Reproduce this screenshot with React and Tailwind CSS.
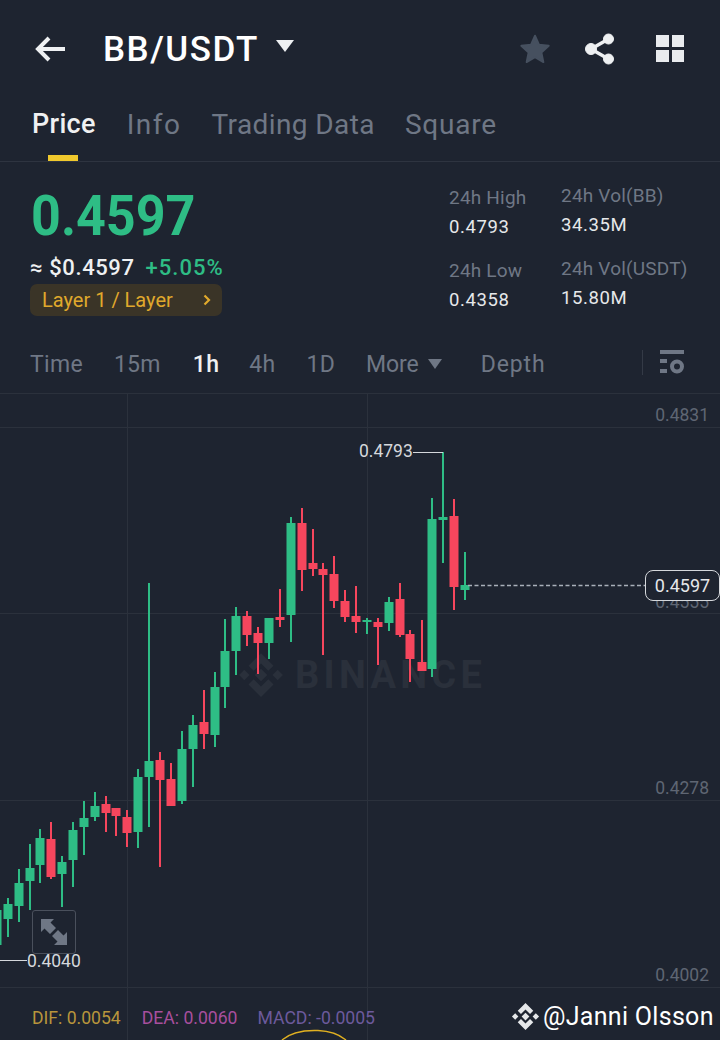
import React from 'react';

// x, wick top, wick bottom, body top, body bottom, up?
const candles = [
  [-3, 910, 945, 910, 945, 1],
  [8, 898, 937, 904, 919, 1],
  [19, 869, 922, 883, 906, 1],
  [30, 844, 910, 868, 881, 1],
  [40, 829, 883, 838, 865, 1],
  [51, 822, 879, 839, 877, 0],
  [62, 856, 907, 862, 874, 1],
  [73, 822, 887, 830, 860, 1],
  [84, 801, 855, 818, 827, 1],
  [95, 792, 821, 806, 817, 1],
  [106, 796, 832, 804, 813, 0],
  [116, 808, 836, 808, 816, 0],
  [127, 810, 847, 817, 833, 0],
  [138, 769, 848, 777, 832, 1],
  [149, 583, 827, 761, 777, 1],
  [160, 752, 867, 760, 780, 0],
  [171, 763, 806, 779, 806, 0],
  [182, 731, 804, 749, 801, 1],
  [193, 715, 787, 725, 749, 1],
  [204, 690, 749, 722, 734, 0],
  [215, 672, 747, 687, 735, 1],
  [225, 619, 708, 651, 687, 1],
  [236, 607, 675, 616, 651, 1],
  [247, 611, 646, 616, 635, 0],
  [258, 627, 674, 633, 643, 0],
  [269, 618, 659, 618, 643, 1],
  [280, 589, 627, 617, 620, 0],
  [291, 517, 642, 523, 615, 1],
  [302, 508, 591, 523, 570, 0],
  [313, 529, 576, 563, 569, 0],
  [323, 563, 655, 569, 575, 0],
  [334, 556, 608, 574, 601, 0],
  [345, 590, 622, 601, 617, 0],
  [356, 586, 633, 616, 622, 0],
  [367, 618, 634, 620, 622, 1],
  [378, 618, 665, 622, 627, 0],
  [389, 597, 631, 602, 623, 1],
  [400, 583, 637, 599, 635, 0],
  [410, 630, 682, 634, 659, 0],
  [422, 620, 670, 662, 671, 0],
  [432, 498, 677, 519, 669, 1],
  [443, 452, 563, 517, 520, 1],
  [454, 499, 610, 516, 587, 0],
  [465, 552, 600, 585, 590, 1],
];

const GREEN = '#2ebd85';
const RED = '#f6465d';
const CHART_TOP = 393;

const BinanceMark = ({ className, color }) => (
  <svg viewBox="0 0 48 48" className={className} fill={color}>
    <path d="M24 3 L36 15 L31 20 L24 13 L17 20 L12 15 Z" />
    <path d="M24 45 L12 33 L17 28 L24 35 L31 28 L36 33 Z" />
    <path d="M3 24 L8 19 L13 24 L8 29 Z" />
    <path d="M35 24 L40 19 L45 24 L40 29 Z" />
    <path d="M24 18 L30 24 L24 30 L18 24 Z" />
  </svg>
);

const ChartLayer = () => (
  <svg className="absolute inset-0 w-full h-full" viewBox={`0 ${CHART_TOP} 720 647`}>
    {/* grid */}
    {[393, 427, 613, 800, 987].map((y) => (
      <line key={y} x1="0" x2="720" y1={y + 0.5} y2={y + 0.5} stroke="#2b313c" strokeWidth="1" />
    ))}
    {[127, 367].map((x) => (
      <line key={x} x1={x + 0.5} x2={x + 0.5} y1="393" y2="1040" stroke="#2b313c" strokeWidth="1" />
    ))}

    {/* candles */}
    {candles.map(([x, wt, wb, bt, bb, up]) => (
      <g key={x} fill={up ? GREEN : RED}>
        <rect x={x - 1} y={wt} width="2" height={wb - wt} />
        <rect x={x - 4.5} y={bt} width="9" height={Math.max(bb - bt, 2)} />
      </g>
    ))}

    {/* high / low leaders */}
    <path d="M413 452.5 H443" stroke="#d5d8dc" strokeWidth="1" fill="none" />
    <path d="M0 960.5 H27" stroke="#d5d8dc" strokeWidth="1" fill="none" />
    {/* last price */}
    <path d="M468 585.5 H645" stroke="#a9afb9" strokeWidth="1.5" strokeDasharray="4 2.5" fill="none" />
    {/* pen mark at the bottom edge */}
    <path d="M282 1040 C290 1033 304 1030 318 1030.5 C330 1031 340 1035 346 1040" stroke="#e0b021" strokeWidth="1.5" fill="none" />
  </svg>
);

const Stat = ({ label, value, className }) => (
  <div className={className}>
    <div className="text-[19px] leading-[24px] text-[#6f7785] tracking-[0.2px]">{label}</div>
    <div className="mt-[5px] text-[18.5px] leading-[24px] text-[#e6e8ea] tracking-[0.6px]">{value}</div>
  </div>
);

const Interval = ({ children, active, className }) => (
  <span className={`${active ? 'text-[#f0f1f2] font-medium' : 'text-[#6f7785]'} ${className}`}>{children}</span>
);

export default function App() {
  return (
    <div className="w-[720px] h-[1040px] overflow-hidden flex flex-col bg-[#1e2430] font-['Roboto',sans-serif]">
      {/* top bar */}
      <div className="h-[97px] shrink-0 flex items-center pl-[34px] pr-[36px]">
        <svg viewBox="0 0 32 28" className="w-[32px] h-[28px] text-[#eef0f2]" fill="none" stroke="currentColor" strokeWidth="4">
          <path d="M31 14 H4" />
          <path d="M15 3 L4 14 L15 25" />
        </svg>
        <span className="ml-[37px] mt-[1px] text-[35px] leading-none font-medium tracking-[1.5px] text-white">BB/USDT</span>
        <svg viewBox="0 0 20 14" className="ml-[16px] mb-[5px] w-[20px] h-[14px]" fill="#eef0f2">
          <path d="M1 1 H19 L10 13 Z" />
        </svg>
        <svg viewBox="0 0 24 24" className="ml-auto w-[32px] h-[32px]" fill="#46505f" stroke="#46505f" strokeWidth="1.4" strokeLinejoin="round">
          <path d="M12 2 L15 8.8 L22.3 9.6 L16.8 14.6 L18.3 21.8 L12 18.2 L5.7 21.8 L7.2 14.6 L1.7 9.6 L9 8.8 Z" />
        </svg>
        <svg viewBox="0 0 30 32" className="ml-[34px] w-[30px] h-[32px]" fill="#eef0f2" stroke="#eef0f2">
          <circle cx="23.5" cy="6" r="5" />
          <circle cx="6" cy="16" r="5.5" />
          <circle cx="23.5" cy="26" r="5" />
          <path d="M23.5 6 L6 16 L23.5 26" fill="none" strokeWidth="3.5" />
        </svg>
        <div className="ml-[41px] mb-[1px] w-[28px] h-[27px] grid grid-cols-2 gap-[3px]">
          <div className="bg-[#e9ebee]" />
          <div className="bg-[#e9ebee]" />
          <div className="bg-[#e9ebee]" />
          <div className="bg-[#e9ebee]" />
        </div>
      </div>

      {/* tabs */}
      <div className="h-[65px] shrink-0 border-b border-[#2e3440] flex items-start pl-[32px] text-[28px] leading-[55px] text-[#6f7785] tracking-[0.4px]">
        <div className="relative h-[64px] text-[27px] tracking-[0.3px] text-[#f0f1f2] font-medium">
          Price
          <div className="absolute left-[16px] bottom-0 w-[30px] h-[6px] bg-[#f0c92d]" />
        </div>
        <span className="ml-[31px] tracking-[1.5px]">Info</span>
        <span className="ml-[30px]">Trading Data</span>
        <span className="ml-[30px] tracking-[0.8px]">Square</span>
      </div>

      {/* price block */}
      <div className="h-[168px] shrink-0 flex pl-[30px] pt-[25px]">
        <div className="w-[419px] shrink-0">
          <div className="ml-[1px] text-[56px] leading-[58px] font-bold text-[#2ebd85] origin-left scale-x-[0.93]">0.4597</div>
          <div className="mt-[9px] flex items-baseline text-[22px] leading-[28px] tracking-[0.6px]">
            <span className="text-[#eef0f2] font-medium">≈ $0.4597</span>
            <span className="ml-[11px] text-[#2ebd85] font-medium tracking-[1px]">+5.05%</span>
          </div>
          <div className="mt-[2px] w-[192px] h-[32px] rounded-[7px] bg-[#3a3427] flex items-center pl-[12px] pr-[11px] text-[#e0a92c] text-[20px]">
            <span>Layer 1 / Layer</span>
            <svg viewBox="0 0 8 12" className="ml-auto w-[8px] h-[12px]" fill="none" stroke="currentColor" strokeWidth="2.2">
              <path d="M1.5 1.5 L6 6 L1.5 10.5" />
            </svg>
          </div>
        </div>
        <div className="w-[112px] shrink-0 -mt-[1px]">
          <Stat label="24h High" value="0.4793" />
          <Stat label="24h Low" value="0.4358" className="mt-[20px]" />
        </div>
        <div className="-mt-[3px]">
          <Stat label="24h Vol(BB)" value="34.35M" />
          <Stat label="24h Vol(USDT)" value="15.80M" className="mt-[20px]" />
        </div>
      </div>

      {/* interval selector */}
      <div className="h-[63px] shrink-0 flex items-center pl-[30px] pr-[36px] text-[23px] tracking-[0.3px] pt-[8px]">
        <Interval>Time</Interval>
        <Interval className="ml-[31px]">15m</Interval>
        <Interval active className="ml-[32px]">1h</Interval>
        <Interval className="ml-[30px]">4h</Interval>
        <Interval className="ml-[31px]">1D</Interval>
        <Interval className="ml-[31px] tracking-[-0.1px]">More</Interval>
        <svg viewBox="0 0 14 10" className="ml-[9px] mb-[4px] w-[14px] h-[10px]" fill="#6f7785">
          <path d="M0 0 H14 L7 10 Z" />
        </svg>
        <Interval className="ml-[39px] tracking-[0.9px]">Depth</Interval>
        <div className="ml-auto mb-[7px] w-px h-[25px] bg-[#343a46]" />
        <svg viewBox="0 0 24 24" className="ml-[17px] mb-[7px] w-[24px] h-[24px]" fill="#6f7785">
          <rect x="0" y="0" width="24" height="4" />
          <rect x="0" y="9" width="7" height="4" />
          <rect x="0" y="19" width="7" height="4" />
          <circle cx="17" cy="16.5" r="5" fill="none" stroke="#6f7785" strokeWidth="4" />
        </svg>
      </div>

      {/* chart */}
      <div className="relative flex-1 flex flex-col">
        {/* watermark sits under the candles */}
        <div className="absolute left-[236px] top-[257px] flex items-center gap-[9px] text-[#2a303b]">
          <BinanceMark className="w-[50px] h-[50px]" color="#2a303b" />
          <span className="text-[38px] leading-none font-bold tracking-[4.3px]">BINANCE</span>
        </div>

        <ChartLayer />

        {/* axis prices */}
        <span className="absolute right-[11px] top-[11px] text-[17.5px] leading-[22px] text-[#5f6673]">0.4831</span>
        <span className="absolute right-[11px] top-[198px] text-[17.5px] leading-[22px] text-[#5f6673]">0.4555</span>
        <span className="absolute right-[11px] top-[384px] text-[17.5px] leading-[22px] text-[#5f6673]">0.4278</span>
        <span className="absolute right-[11px] top-[571px] text-[17.5px] leading-[22px] text-[#5f6673]">0.4002</span>

        {/* last price tag */}
        <div className="absolute left-[645px] top-[177px] w-[75px] h-[31px] rounded-[8px] border border-[#d5d8dc] bg-[#1e2430] flex items-center justify-center text-[18px] text-[#e6e8ea]">0.4597</div>

        {/* high / low */}
        <span className="absolute left-[359px] top-[47px] text-[17.5px] leading-[22px] text-[#d5d8dc]">0.4793</span>
        <span className="absolute left-[27px] top-[557px] text-[17.5px] leading-[22px] text-[#d5d8dc]">0.4040</span>

        {/* fullscreen button */}
        <div className="absolute left-[32px] top-[517px] w-[44px] h-[44px] rounded-[3px] border border-[#4a505c] bg-[#1e2430] flex items-center justify-center">
          <svg viewBox="0 0 26 26" className="w-[26px] h-[26px]" fill="#6f7785">
            <path d="M0 0 H13 L9.5 3.5 L15 9 L9 15 L3.5 9.5 L0 13 Z" />
            <path d="M26 26 H13 L16.5 22.5 L11 17 L17 11 L22.5 16.5 L26 13 Z" />
          </svg>
        </div>

        {/* MACD legend */}
        <div className="mt-auto relative h-[53px] flex items-start pt-[20px] pl-[32px] text-[17.6px] leading-[22px]">
          <span className="text-[#b8953c]">DIF: 0.0054</span>
          <span className="ml-[21px] text-[#a84f9e]">DEA: 0.0060</span>
          <span className="ml-[20px] text-[#6c5a9c]">MACD: -0.0005</span>
        </div>

        {/* share watermark */}
        <div className="absolute left-[510px] top-[608px] flex items-center gap-[2px] text-white">
          <BinanceMark className="w-[31px] h-[31px]" color="#e6e8ea" />
          <span className="text-[25px] leading-[30px] tracking-[0.3px]">@Janni Olsson</span>
        </div>
      </div>
    </div>
  );
}
